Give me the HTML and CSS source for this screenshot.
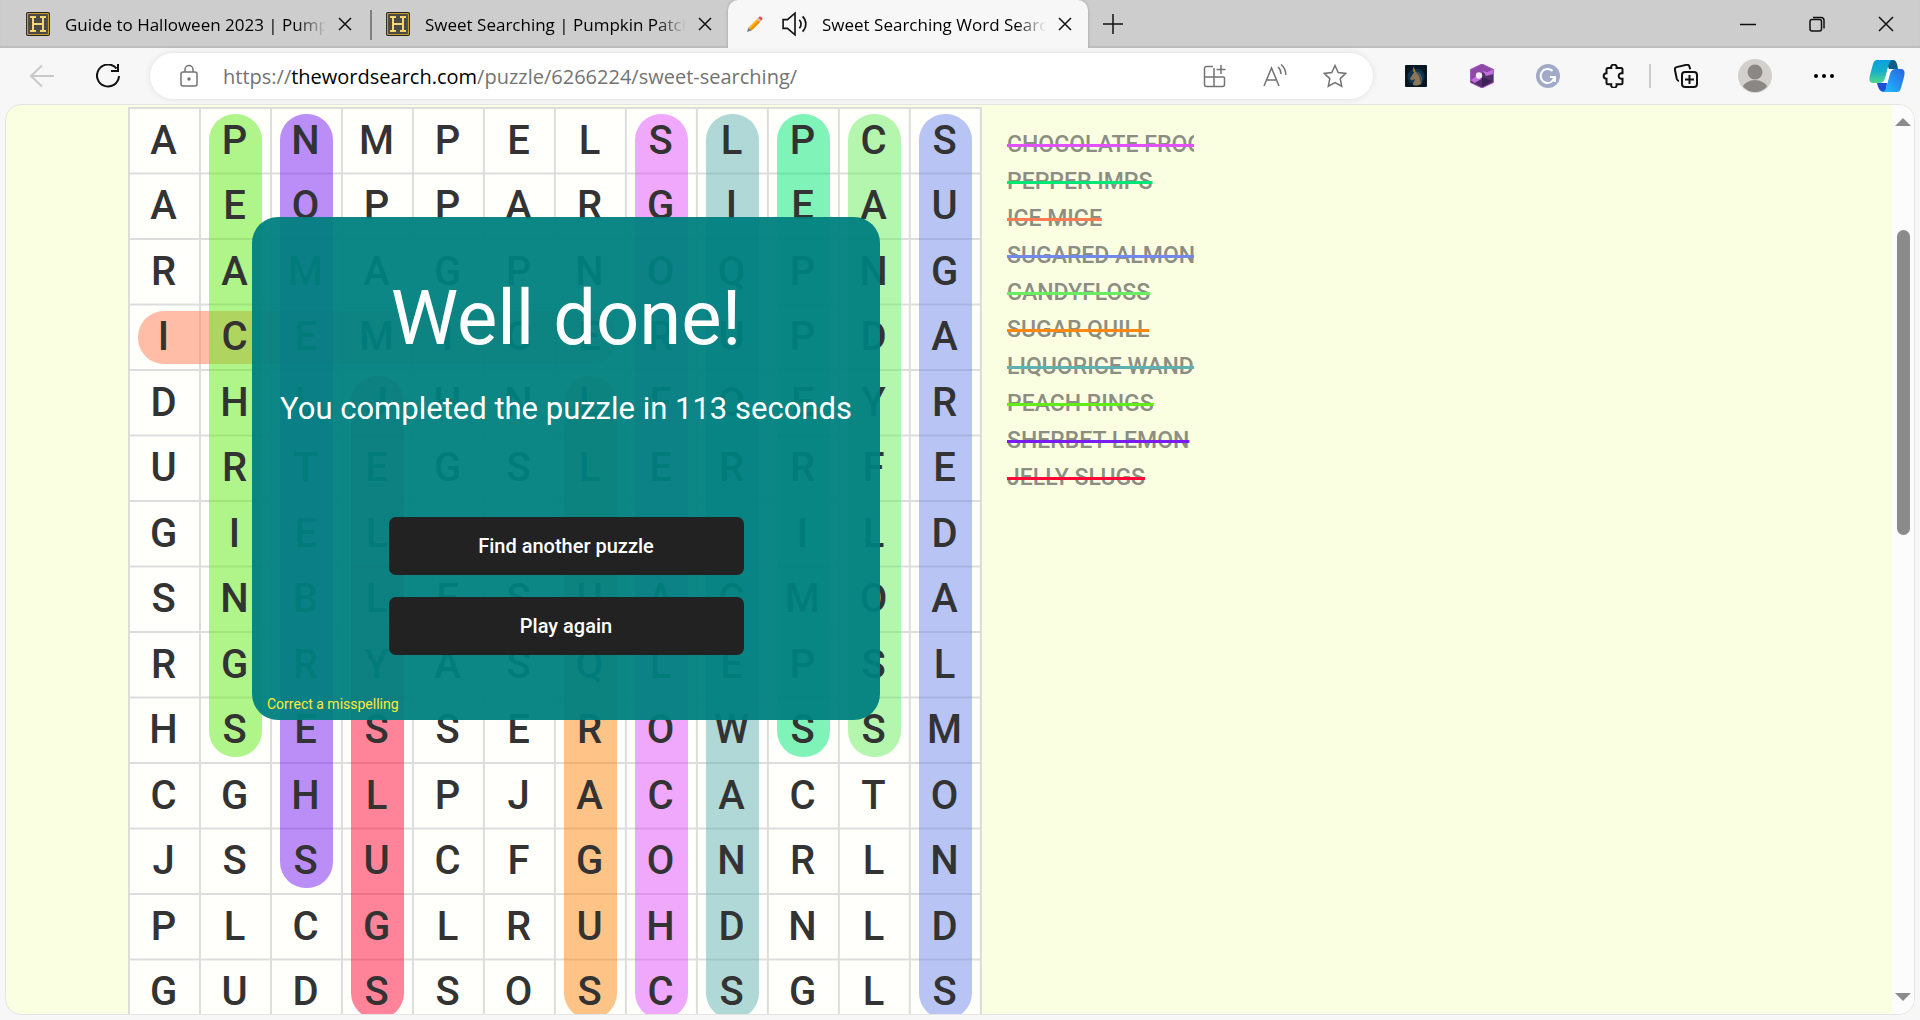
FILE: index.html
```
<!DOCTYPE html>
<html lang="en">
<head>
    <meta charset="UTF-8">
    <meta name="viewport" content="width=device-width, initial-scale=1.0">
    <title>Sweet Searching Word Search</title>
    <link rel="stylesheet" href="styles.css">
</head>
<body>
    <!-- Tab strip -->
    <header class="tab-strip">
        <div class="tab">
            <svg class="favicon" viewBox="0 0 24 24">
                <rect width="24" height="24" rx="2" fill="#222"/>
                <rect x="1.5" y="1.5" width="21" height="21" rx="1" fill="#4a4a46" stroke="#c99a22" stroke-width="1.2"/>
                <path d="M4 5h6M14 5h6M4 19h6M14 19h6M7 5v14M17 5v14M7 12h10" stroke="#f3d76a" stroke-width="2" fill="none"/>
            </svg>
            <span class="tab-title">Guide to Halloween 2023 | Pumpk</span>
            <button class="tab-close" aria-label="Close tab"><svg viewBox="0 0 14 14"><path d="M1 1l12 12M13 1L1 13"/></svg></button>
        </div>
        <div class="tab tab-second">
            <svg class="favicon" viewBox="0 0 24 24">
                <rect width="24" height="24" rx="2" fill="#222"/>
                <rect x="1.5" y="1.5" width="21" height="21" rx="1" fill="#4a4a46" stroke="#c99a22" stroke-width="1.2"/>
                <path d="M4 5h6M14 5h6M4 19h6M14 19h6M7 5v14M17 5v14M7 12h10" stroke="#f3d76a" stroke-width="2" fill="none"/>
            </svg>
            <span class="tab-title">Sweet Searching | Pumpkin Patch</span>
            <button class="tab-close" aria-label="Close tab"><svg viewBox="0 0 14 14"><path d="M1 1l12 12M13 1L1 13"/></svg></button>
        </div>
        <div class="tab tab-active">
            <svg class="pencil" viewBox="0 0 18 18">
                <path d="M1 17l1.500-4.500 3 3z" fill="#6b7f88"/>
                <path d="M2.500 12.500L11 4l3 3-8.500 8.500z" fill="#ffb71b"/>
                <path d="M4 14L12.500 5.500 14 7l-8.500 8.500z" fill="#f08a00"/>
                <path d="M11 4l1.200-1.200 3 3L14 7z" fill="#b9c4ca"/>
                <path d="M12.200 2.800l1-1c1.500-1.300 4.200 1.500 3 3l-1 1z" fill="#ef5350"/>
            </svg>
            <svg class="speaker" viewBox="0 0 24 24"><path d="M1 8v8h4l7 6V2L5 8zM16 8c2 2.500 2 5.500 0 8M19 5c4 4 4 10 0 14"/></svg>
            <span class="tab-title">Sweet Searching Word Search</span>
            <button class="tab-close" aria-label="Close tab"><svg viewBox="0 0 14 14"><path d="M1 1l12 12M13 1L1 13"/></svg></button>
        </div>
        <button class="new-tab" aria-label="New tab"><svg viewBox="0 0 22 22"><path d="M11 1v20M1 11h20"/></svg></button>
        <div class="window-buttons">
            <button aria-label="Minimize"><svg viewBox="0 0 16 16"><path d="M0 8.500h16"/></svg></button>
            <button aria-label="Restore"><svg viewBox="0 0 16 16"><rect x="1" y="3.500" width="11.500" height="11.500" rx="2"/><path d="M4 1.500h8a3 3 0 0 1 3 3v8"/></svg></button>
            <button aria-label="Close"><svg viewBox="0 0 16 16"><path d="M1 1l14 14M15 1L1 15"/></svg></button>
        </div>
    </header>

    <!-- Toolbar -->
    <nav class="toolbar">
        <button class="tool" aria-label="Back"><svg class="back" viewBox="0 0 24 24"><path d="M12 1.500L1 12l11 10.500M1 12h23"/></svg></button>
        <button class="tool" aria-label="Refresh"><svg class="refresh" viewBox="0 0 24 24"><path d="M20.500 4.500A11 11 0 1 0 23 12M22 0v7h-7"/></svg></button>
        <div class="address">
            <svg class="lock" viewBox="0 0 18 24"><rect x="1" y="8" width="16" height="14" rx="2"/><path d="M5 8V5.500a4 4 0 0 1 8 0V8"/><circle cx="9" cy="15" r="1" class="dot"/></svg>
            <div class="url" role="textbox" aria-label="Address" contenteditable="true" spellcheck="false">https://<b>thewordsearch.com</b>/puzzle/6266224/sweet-searching/</div>
            <button class="address-tool" aria-label="Apps"><svg viewBox="0 0 24 24"><path d="M10 2.500H3.500a2 2 0 0 0-2 2v16a2 2 0 0 0 2 2h16a2 2 0 0 0 2-2V14a1 1 0 0 0-1-1H1.500M11 22V4M18 1v9M13.500 5.500h9"/></svg></button>
            <button class="address-tool" aria-label="Read aloud"><svg viewBox="0 0 24 24"><path d="M1 22L8.500 4 16 22M3.500 16h10M15 3c2 1.800 3 4 3 7M18 0.500c3 2.500 4.800 6 4.800 10.500"/></svg></button>
            <button class="address-tool" aria-label="Add to favorites"><svg viewBox="0 0 24 24"><path d="M12 1.500l3.200 7 7.600.9-5.600 5.200 1.500 7.600L12 18.500l-6.700 3.700 1.500-7.600L1.200 9.400l7.600-.9z"/></svg></button>
        </div>
        <button class="tool" aria-label="Unicorn extension">
            <svg viewBox="0 0 24 24">
                <rect x="1" y="1" width="22" height="22" rx="1" fill="#071620"/>
                <circle cx="12" cy="13" r="8.500" fill="#10344f"/>
                <path d="M9 21c0-3 1.500-4 2-6l-3.500 1.500-1.500-2L9 10l1.500-2.500 4 1c3.500 2.500 4 8 2.500 11.500-2 1.500-5 2-8 1z" fill="#8b7657"/>
                <path d="M9.500 8L9 2l2.500 5.500z" fill="#c7942f"/>
                <path d="M12.500 8c4 2 4 7 5 11" stroke="#3c4c59" stroke-width="1.500" fill="none"/>
            </svg>
        </button>
        <button class="tool" aria-label="Hexagon extension">
            <svg viewBox="0 0 24 24">
                <path d="M12 0l11.500 5.500v13L12 24 .5 18.500v-13z" fill="#52306b"/>
                <path d="M12 0L.5 5.500v10L12 9l11.500-3.500z" fill="#8f4aa8"/>
                <path d="M.5 16l6-4 5 3-7 4zM13 7l4 1 6.500-3v5L16 12z" fill="#c56be0"/>
                <path d="M12 13l10 4-10 6z" fill="#3e2254"/>
                <circle cx="9" cy="11.500" r="3.200" fill="#f7e9ff"/>
                <path d="M12 0l11.500 5.500v13L12 24 .5 18.500v-13z" fill="none" stroke="#a55cc2"/>
            </svg>
        </button>
        <button class="tool" aria-label="Grammar extension">
            <svg viewBox="0 0 24 24"><circle cx="12" cy="12" r="12" fill="#a2aac8"/><path d="M16.500 7a7 7 0 1 0 2 6M19 18v-5h-5" fill="none" stroke="#fff" stroke-width="2"/></svg>
        </button>
        <button class="tool" aria-label="Extensions">
            <svg class="line" viewBox="0 0 24 24"><path d="M6 4h3.200a2.800 2.800 0 1 1 5.400 0H19a1.500 1.500 0 0 1 1.500 1.500v3.700h-1a2.800 2.800 0 1 0 0 5.600h1v4A1.500 1.500 0 0 1 19 20.300h-4.400a2.800 2.800 0 1 1-5.400 0H6a1.500 1.500 0 0 1-1.500-1.500v-4a2.800 2.800 0 1 1 0-5.600V5.500A1.500 1.500 0 0 1 6 4z"/></svg>
        </button>
        <span class="divider"></span>
        <button class="tool tool-wide" aria-label="Collections">
            <svg class="line" viewBox="0 0 24 24"><path d="M5 17c-1.300-.2-1.800-1-2.200-2L.9 5.800C.6 4.400 1.200 3.500 2.500 3.100L12.500.8c1.500-.3 2.400.3 2.900 1.600l.8 2.800"/><rect x="8" y="8" width="15" height="15" rx="3"/><path d="M15.500 11v9M11 15.500h9"/></svg>
        </button>
        <button class="tool tool-wide" aria-label="Profile">
            <svg class="avatar" viewBox="0 0 34 34"><clipPath id="round"><circle cx="17" cy="17" r="16"/></clipPath><circle cx="17" cy="17" r="17" fill="#d2d0cc"/><circle cx="17" cy="13" r="7.500" fill="#8a8784"/><ellipse cx="17" cy="31" rx="13" ry="10" fill="#8a8784" clip-path="url(#round)"/></svg>
        </button>
        <button class="tool tool-wide" aria-label="Settings and more">
            <svg viewBox="0 0 24 24"><circle cx="4" cy="12" r="2"/><circle cx="12" cy="12" r="2"/><circle cx="20" cy="12" r="2"/></svg>
        </button>
        <button class="tool" aria-label="Copilot">
            <svg class="copilot" viewBox="0 0 36 32">
                <defs>
                    <linearGradient id="cool" x1="0" y1="0" x2="0" y2="1"><stop offset="0" stop-color="#0a9fe0"/><stop offset=".5" stop-color="#18b0c8"/><stop offset="1" stop-color="#52d98b"/></linearGradient>
                    <linearGradient id="deep" x1="1" y1="0" x2="0" y2="1"><stop offset="0" stop-color="#2a62e0"/><stop offset="1" stop-color="#1fc0ff"/></linearGradient>
                </defs>
                <path d="M16 0h8c3 0 4 3 5 9h-9z" fill="#0b5f86"/>
                <path d="M8 23h10l-1 9h-2c-4 0-6-4-7-9z" fill="#1b4fd8"/>
                <path d="M8 0h15c-2 1-3 3-4 7l-3 11c-1 4-3 5-6 5H4c-4 0-4-4-3-8L4 4c1-3 2-4 4-4z" fill="url(#cool)"/>
                <path d="M28 32H14c2-1 3-3 4-7l3-11c1-4 3-5 6-5h5c4 0 4 4 3 8l-3 11c-1 3-2 4-4 4z" fill="url(#deep)"/>
                <path d="M19 9h5c-2 1-3 3-4 6l-2 8h-5c2-1 3-3 4-6z" fill="#fff"/>
            </svg>
        </button>
    </nav>

    <!-- Puzzle page -->
    <main class="page">
        <div class="content">
            <div class="board">
                <div class="marks">
                    <i class="mark coral"></i>
                    <i class="mark lime"></i>
                    <i class="mark violet"></i>
                    <i class="mark red"></i>
                    <i class="mark orange"></i>
                    <i class="mark pink"></i>
                    <i class="mark teal"></i>
                    <i class="mark mint"></i>
                    <i class="mark green"></i>
                    <i class="mark blue"></i>
                </div>
                <div class="letters">
                    <span>A</span><span>P</span><span>N</span><span>M</span><span>P</span><span>E</span><span>L</span><span>S</span><span>L</span><span>P</span><span>C</span><span>S</span>
                    <span>A</span><span>E</span><span>O</span><span>P</span><span>P</span><span>A</span><span>R</span><span>G</span><span>I</span><span>E</span><span>A</span><span>U</span>
                    <span>R</span><span>A</span><span>M</span><span>A</span><span>G</span><span>P</span><span>N</span><span>O</span><span>Q</span><span>P</span><span>N</span><span>G</span>
                    <span>I</span><span>C</span><span>E</span><span>M</span><span>I</span><span>C</span><span>E</span><span>R</span><span>U</span><span>P</span><span>D</span><span>A</span>
                    <span>D</span><span>H</span><span>L</span><span>J</span><span>H</span><span>N</span><span>L</span><span>F</span><span>O</span><span>E</span><span>Y</span><span>R</span>
                    <span>U</span><span>R</span><span>T</span><span>E</span><span>G</span><span>S</span><span>L</span><span>E</span><span>R</span><span>R</span><span>F</span><span>E</span>
                    <span>G</span><span>I</span><span>E</span><span>L</span><span>A</span><span>R</span><span>I</span><span>T</span><span>I</span><span>I</span><span>L</span><span>D</span>
                    <span>S</span><span>N</span><span>B</span><span>L</span><span>E</span><span>S</span><span>U</span><span>A</span><span>C</span><span>M</span><span>O</span><span>A</span>
                    <span>R</span><span>G</span><span>R</span><span>Y</span><span>A</span><span>S</span><span>Q</span><span>L</span><span>E</span><span>P</span><span>S</span><span>L</span>
                    <span>H</span><span>S</span><span>E</span><span>S</span><span>S</span><span>E</span><span>R</span><span>O</span><span>W</span><span>S</span><span>S</span><span>M</span>
                    <span>C</span><span>G</span><span>H</span><span>L</span><span>P</span><span>J</span><span>A</span><span>C</span><span>A</span><span>C</span><span>T</span><span>O</span>
                    <span>J</span><span>S</span><span>S</span><span>U</span><span>C</span><span>F</span><span>G</span><span>O</span><span>N</span><span>R</span><span>L</span><span>N</span>
                    <span>P</span><span>L</span><span>C</span><span>G</span><span>L</span><span>R</span><span>U</span><span>H</span><span>D</span><span>N</span><span>L</span><span>D</span>
                    <span>G</span><span>U</span><span>D</span><span>S</span><span>S</span><span>O</span><span>S</span><span>C</span><span>S</span><span>G</span><span>L</span><span>S</span>
                </div>

                <div class="dialog" role="dialog" aria-labelledby="done">
                    <h1 id="done">Well done!</h1>
                    <p>You completed the puzzle in 113 seconds</p>
                    <button>Find another puzzle</button>
                    <button>Play again</button>
                    <a href="#">Correct a misspelling</a>
                </div>
            </div>

            <ul class="words">
                <li class="pink">CHOCOLATE FROGS</li>
                <li class="mint">PEPPER IMPS</li>
                <li class="coral">ICE MICE</li>
                <li class="blue">SUGARED ALMONDS</li>
                <li class="green">CANDYFLOSS</li>
                <li class="orange">SUGAR QUILL</li>
                <li class="teal">LIQUORICE WANDS</li>
                <li class="lime">PEACH RINGS</li>
                <li class="violet">SHERBET LEMON</li>
                <li class="red">JELLY SLUGS</li>
            </ul>
        </div>

        <div class="scrollbar">
            <svg viewBox="0 0 16 8"><path d="M8 0l8 8H0z"/></svg>
            <div class="track"><div class="thumb"></div></div>
            <svg viewBox="0 0 16 8"><path d="M0 0h16L8 8z"/></svg>
        </div>
    </main>
</body>
</html>
```
FILE: styles.css
```
* {
    box-sizing: border-box;
}
body {
    margin: 0;
    height: 100vh;
    display: flex;
    flex-direction: column;
    overflow: hidden;
    background: #f7f7f7;
    color: #000;
    font-family: "Open Sans", "Noto Sans", sans-serif;
}
button {
    border: none;
    padding: 0;
    background: none;
    font: inherit;
    color: inherit;
    cursor: pointer;
}
svg {
    display: block;
    flex: none;
}

/* Tab strip */
.tab-strip {
    display: flex;
    height: 48px;
    padding-left: 8px;
    background: #cdcdcd;
    box-shadow: inset 0 -2px 1px #bdbdbd;
}
.tab {
    display: flex;
    align-items: center;
    width: 360px;
    padding: 0 16px 0 18px;
    font-size: 17px;
}
.tab-second {
    background: linear-gradient(#808080, #808080) 2px 10px / 2px 30px no-repeat;
}
.tab-active {
    background: #f7f7f7;
    border-radius: 10px 10px 0 0;
    box-shadow: 0 0 3px #999;
    clip-path: inset(0 -4px);
}
.favicon {
    width: 24px;
    height: 24px;
    margin-right: 15px;
}
.pencil {
    width: 18px;
    height: 18px;
    margin-right: 18px;
}
.speaker {
    width: 26px;
    height: 26px;
    margin-right: 14px;
}
.tab-title {
    flex: 1;
    min-width: 0;
    margin-right: 12px;
    overflow: hidden;
    white-space: nowrap;
    mask-image: linear-gradient(to left, transparent, #000 30px);
}
.tab-close svg {
    width: 14px;
    height: 14px;
}
.tab-strip button svg,
.speaker {
    fill: none;
    stroke: #111;
    stroke-width: 1.5;
}
.new-tab {
    width: 50px;
    display: grid;
    place-items: center;
}
.new-tab svg {
    width: 22px;
    height: 22px;
}
.window-buttons {
    display: flex;
    margin-left: auto;
}
.window-buttons button {
    width: 69px;
    display: grid;
    place-items: center;
}
.window-buttons svg {
    width: 16px;
    height: 16px;
}

/* Toolbar */
.toolbar {
    display: flex;
    align-items: center;
    height: 56px;
    padding-left: 9px;
}
.tool {
    width: 66px;
    height: 48px;
    display: grid;
    place-items: center;
}
.tool-wide {
    width: 69px;
}
.tool svg {
    width: 24px;
    height: 24px;
}
.tool .line,
.tool .refresh,
.tool .back {
    fill: none;
    stroke: #111;
    stroke-width: 2;
}
.tool .back {
    stroke: #c9c9c9;
}
.tool .avatar {
    width: 34px;
    height: 34px;
}
.tool .copilot {
    width: 36px;
    height: 32px;
}
.tool:last-child {
    width: 62px;
    padding-right: 4px;
}
.divider {
    width: 2px;
    height: 24px;
    margin-left: 2px;
    background: #ccc;
}
.address {
    flex: 1;
    display: flex;
    align-items: center;
    height: 46px;
    margin: 0 10px 0 9px;
    padding: 0 8px 0 30px;
    border-radius: 23px;
    background: #fff;
    box-shadow: 0 0 6px rgba(0, 0, 0, 0.1);
}
.address svg {
    fill: none;
    stroke: #737373;
    stroke-width: 1.5;
}
.address .dot {
    fill: #737373;
}
.lock {
    width: 18px;
    height: 24px;
}
.url {
    flex: 1;
    margin-left: 25px;
    outline: none;
    font-size: 20px;
    white-space: nowrap;
    color: #737373;
}
.url b {
    font-weight: 400;
    color: #000;
}
.address-tool {
    width: 60px;
    height: 46px;
    display: grid;
    place-items: center;
}
.address-tool svg {
    width: 24px;
    height: 24px;
}

/* Puzzle page */
.page {
    flex: 1;
    min-height: 0;
    display: flex;
    margin: 0 5px 5px;
    border: 1px solid #e4e4e4;
    border-radius: 16px;
    overflow: hidden;
    background: #faffe1;
    font-family: Roboto, sans-serif;
}
.content {
    flex: 1;
    display: flex;
    align-items: flex-start;
    gap: 26px;
    padding: 3px 0 0 123px;
}
.board {
    position: relative;
    flex: none;
    width: 852px;
    aspect-ratio: 852 / 917;
    display: grid;
    outline: 1px solid #ddd;
    background:
        linear-gradient(90deg, #ddd 1px, transparent 1px, transparent calc(100% - 1px), #ddd calc(100% - 1px)) 0 0 / calc(100% / 12) 100%,
        linear-gradient(#ddd 1px, transparent 1px, transparent calc(100% - 1px), #ddd calc(100% - 1px)) 0 0 / 100% calc(100% / 14),
        #fffffb;
}
.marks,
.letters {
    grid-area: 1 / 1;
    display: grid;
    grid-template-columns: repeat(12, 1fr);
    grid-template-rows: repeat(14, 1fr);
}
.letters span {
    display: grid;
    place-items: center;
    position: relative;
    padding-right: 2px;
    font-size: 40px;
    font-weight: 500;
    line-height: 48px;
    color: #333;
}

/* Word colours */
.lime { --word: #61eb18; }
.violet { --word: #771bf1; }
.red { --word: #ff0a37; }
.orange { --word: #fe8711; }
.pink { --word: #e151fd; }
.teal { --word: #5fb1b1; }
.mint { --word: #01e775; }
.green { --word: #69ed61; }
.blue { --word: #7189eb; }
.coral { --word: #ff7b55; }

.mark {
    margin: 6px 9px;
    border-radius: 26px;
    background: var(--word);
    opacity: 0.5;
}
.mark.lime { grid-area: 1 / 2 / 11 / 3; }
.mark.violet { grid-area: 1 / 3 / 13 / 4; }
.mark.red { grid-area: 5 / 4 / 15 / 5; }
.mark.orange { grid-area: 5 / 7 / 15 / 8; }
.mark.pink { grid-area: 1 / 8 / 15 / 9; }
.mark.teal { grid-area: 1 / 9 / 15 / 10; }
.mark.mint { grid-area: 1 / 10 / 11 / 11; }
.mark.green { grid-area: 1 / 11 / 11 / 12; }
.mark.blue { grid-area: 1 / 12 / 15 / 13; }
.mark.coral { grid-area: 4 / 1 / 5 / 8; }

.words {
    width: 187px;
    margin: 0;
    padding: 18px 0 0;
    overflow: hidden;
    list-style: none;
    white-space: nowrap;
    font-size: 23px;
    font-weight: 500;
    line-height: 37px;
    color: #8d8e83;
}
.words li {
    text-decoration: line-through 3px var(--word);
    text-decoration-skip-ink: none;
}

/* Finished dialog */
.dialog {
    position: absolute;
    top: 109px;
    left: 123px;
    width: 628px;
    display: flex;
    flex-direction: column;
    align-items: center;
    padding: 56px 15px 8px;
    border-radius: 26px;
    background: rgba(0, 128, 128, 0.95);
    color: #fff;
}
.dialog h1 {
    margin: 0;
    font-size: 76px;
    font-weight: 400;
    line-height: 90px;
}
.dialog p {
    margin: 26px 0 88px;
    font-size: 31px;
    line-height: 40px;
    white-space: nowrap;
}
.dialog button {
    width: 355px;
    height: 58px;
    margin-bottom: 22px;
    border-radius: 7px;
    background: #222;
    font-size: 20px;
    font-weight: 500;
}
.dialog a {
    align-self: flex-start;
    margin-top: 19px;
    font-size: 14px;
    line-height: 16px;
    color: #ffeb3b;
    text-decoration: none;
}

/* Scrollbar */
.scrollbar {
    width: 22px;
    display: flex;
    flex-direction: column;
    align-items: center;
    padding: 13px 0;
    background: #fcfcfc;
}
.scrollbar svg {
    width: 16px;
    height: 8px;
    fill: #8b8b8b;
}
.track {
    flex: 1;
    padding-top: 104px;
}
.thumb {
    width: 13px;
    height: 40%;
    border-radius: 7px;
    background: #8b8b8b;
}
```
